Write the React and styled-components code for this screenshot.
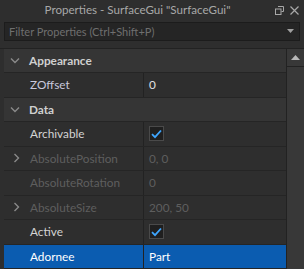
import React from "react";
import styled, { createGlobalStyle } from "styled-components";

const GlobalStyle = createGlobalStyle`
  html, body {
    margin: 0;
    padding: 0;
    background: #2e2e2e;
  }
  * {
    box-sizing: border-box;
  }
`;

const rows = [
  { type: "section", name: "Appearance" },
  { type: "prop", name: "ZOffset", value: "0", tint: true },
  { type: "section", name: "Data" },
  { type: "prop", name: "Archivable", check: true },
  { type: "prop", name: "AbsolutePosition", value: "0, 0", disabled: true, expand: true },
  { type: "prop", name: "AbsoluteRotation", value: "0", disabled: true },
  { type: "prop", name: "AbsoluteSize", value: "200, 50", disabled: true, expand: true },
  { type: "prop", name: "Active", check: true },
  { type: "prop", name: "Adornee", value: "Part", selected: true },
];

const Panel = styled.div`
  width: 304px;
  height: 269px;
  overflow: hidden;
  background: #2e2e2e;
  display: flex;
  flex-direction: column;
  font-family: "Lato", "Open Sans", sans-serif;
`;

const TitleBar = styled.div`
  height: 22px;
  display: flex;
  align-items: center;
  color: #a8a8a8;
  font-size: 11.6px;
`;

const Title = styled.div`
  flex: 1;
  text-align: center;
  padding-bottom: 1px;
`;

const TitleIcons = styled.div`
  display: flex;
  gap: 6px;
  align-items: center;
  padding-right: 5px;
`;

const Filter = styled.div`
  margin: 1px 4px 0 4px;
  height: 20px;
  background: #252525;
  border: 1px solid #1c1c1c;
  display: flex;
  align-items: center;
  justify-content: space-between;
  padding: 0 5px 0 4px;
  color: #6f6f6f;
  font-size: 11px;
`;

const Body = styled.div`
  flex: 1;
  display: flex;
  margin-top: 7px;
  border-top: 1px solid #222;
`;

const List = styled.div`
  flex: 1;
  padding-left: 4px;
  display: flex;
  flex-direction: column;
  border-right: 1px solid #222;
`;

const Row = styled.div`
  height: 24.5px;
  flex-shrink: 0;
  display: flex;
  border-bottom: 1px solid #252525;
  background: ${(p) => (p.$selected ? "#0b5cb0" : p.$section ? "#353535" : "#2e2e2e")};
  font-size: 11.8px;
`;

const SectionName = styled.div`
  display: flex;
  align-items: center;
  gap: 9px;
  padding-left: 6px;
  color: #d0d0d0;
  font-weight: bold;
`;

const NameCell = styled.div`
  width: 140px;
  display: flex;
  align-items: center;
  padding-left: 7px;
  gap: 9px;
  border-right: 1px solid #222;
  color: ${(p) => (p.$selected ? "#ffffff" : p.$disabled ? "#5e5e5e" : p.$tint ? "#c9c9dd" : "#d4d4d4")};
`;

const Arrow = styled.span`
  width: 10px;
  display: flex;
  justify-content: center;
`;

const ValueCell = styled.div`
  flex: 1;
  display: flex;
  align-items: center;
  padding-left: 5px;
  color: ${(p) => (p.$selected ? "#ffffff" : p.$disabled ? "#5e5e5e" : "#e0e0e0")};
`;

const CheckBox = styled.div`
  width: 15px;
  height: 15px;
  background: #1f1f1f;
  border: 1px solid #4a4a4a;
  display: flex;
  align-items: center;
  justify-content: center;
`;

const ScrollBar = styled.div`
  width: 17px;
  background: #383838;
  display: flex;
  flex-direction: column;
`;

const ScrollButton = styled.div`
  height: 18px;
  border-bottom: 1px solid #222;
  display: flex;
  align-items: center;
  justify-content: center;
`;

const Chevron = ({ down }) =>
  down ? (
    <svg width="10" height="7" viewBox="0 0 10 7">
      <path d="M1 1.5 L5 5.5 L9 1.5" fill="none" stroke="#8a8a8a" strokeWidth="1.4" />
    </svg>
  ) : (
    <svg width="7" height="10" viewBox="0 0 7 10">
      <path d="M1.5 1 L5.5 5 L1.5 9" fill="none" stroke="#8a8a8a" strokeWidth="1.4" />
    </svg>
  );

const Check = () => (
  <svg width="11" height="10" viewBox="0 0 11 10">
    <path d="M1 5.2 L4 8.2 L10 1.5" fill="none" stroke="#3ea6ff" strokeWidth="1.8" />
  </svg>
);

export default function App() {
  return (
    <>
      <GlobalStyle />
      <Panel>
        <TitleBar>
          <Title>Properties - SurfaceGui "SurfaceGui"</Title>
          <TitleIcons>
            <svg width="9" height="9" viewBox="0 0 9 9">
              <path d="M3 0.5 H8.5 V5.5 H6.5" fill="none" stroke="#a8a8a8" strokeWidth="1" />
              <rect x="0.5" y="3" width="5.5" height="5.5" fill="none" stroke="#a8a8a8" strokeWidth="1" />
            </svg>
            <svg width="9" height="9" viewBox="0 0 9 9">
              <path d="M0.5 0.5 L8.5 8.5 M8.5 0.5 L0.5 8.5" stroke="#a8a8a8" strokeWidth="1.2" />
            </svg>
          </TitleIcons>
        </TitleBar>
        <Filter>
          <span>Filter Properties (Ctrl+Shift+P)</span>
          <svg width="7" height="4" viewBox="0 0 7 4">
            <path d="M0 0 H7 L3.5 4 Z" fill="#a0a0a0" />
          </svg>
        </Filter>
        <Body>
          <List>
            {rows.map((r) =>
              r.type === "section" ? (
                <Row key={r.name} $section>
                  <SectionName>
                    <Arrow>
                      <Chevron down />
                    </Arrow>
                    {r.name}
                  </SectionName>
                </Row>
              ) : (
                <Row key={r.name} $selected={r.selected}>
                  <NameCell $disabled={r.disabled} $selected={r.selected} $tint={r.tint}>
                    <Arrow>{r.expand && <Chevron />}</Arrow>
                    {r.name}
                  </NameCell>
                  <ValueCell $disabled={r.disabled} $selected={r.selected}>
                    {r.check ? (
                      <CheckBox>
                        <Check />
                      </CheckBox>
                    ) : (
                      r.value
                    )}
                  </ValueCell>
                </Row>
              )
            )}
          </List>
          <ScrollBar>
            <ScrollButton>
              <svg width="9" height="5" viewBox="0 0 9 5">
                <path d="M0 5 L4.5 0 L9 5 Z" fill="#b8b8b8" />
              </svg>
            </ScrollButton>
          </ScrollBar>
        </Body>
      </Panel>
    </>
  );
}
